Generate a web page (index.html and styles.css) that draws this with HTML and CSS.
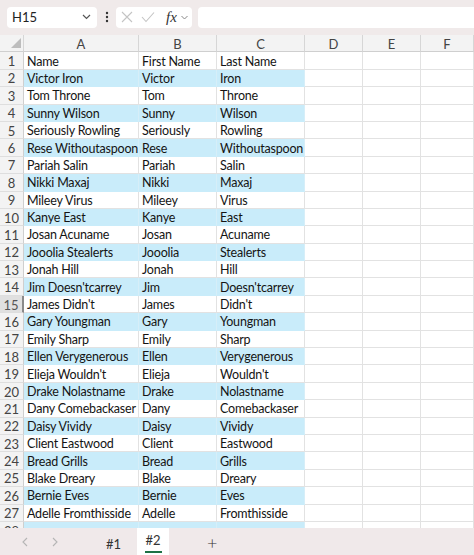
FILE: index.html
```html
<!DOCTYPE html>
<html>
<head>
<meta charset="utf-8">
<link rel="stylesheet" href="styles.css">
</head>
<body>
<div class="app">
  <div class="toolbar">
    <div class="namebox">
      <span class="ref">H15</span>
      <svg class="chev" width="9" height="6" viewBox="0 0 9 6"><path d="M1 1 L4.5 4.5 L8 1" fill="none" stroke="#555" stroke-width="1.2"/></svg>
    </div>
    <svg class="kebab" width="4" height="12" viewBox="0 0 4 12"><circle cx="2" cy="2" r="1.2" fill="#333"/><circle cx="2" cy="6" r="1.2" fill="#333"/><circle cx="2" cy="10" r="1.2" fill="#333"/></svg>
    <div class="fxbox">
      <svg width="12" height="12" viewBox="0 0 12 12"><path d="M1 1 L11 11 M11 1 L1 11" stroke="#c4c4c4" stroke-width="1.1"/></svg>
      <svg width="14" height="12" viewBox="0 0 14 12"><path d="M1 6 L5 10.5 L13 1.5" fill="none" stroke="#c4c4c4" stroke-width="1.1"/></svg>
      <span class="fx">fx</span>
      <svg width="7" height="5" viewBox="0 0 7 5"><path d="M0.5 1 L3.5 4 L6.5 1" fill="none" stroke="#888" stroke-width="1"/></svg>
    </div>
    <div class="formula"></div>
  </div>

  <div class="sheet">
    <div class="grid" id="grid">
      <div class="corner"><svg width="10" height="10" viewBox="0 0 10 10"><path d="M10 0 L10 10 L0 10 Z" fill="#bdbdbd"/></svg></div>
      <div class="ch">A</div><div class="ch">B</div><div class="ch">C</div><div class="ch">D</div><div class="ch">E</div><div class="ch">F</div>
    </div>
  </div>

  <div class="tabs">
    <svg class="nav" width="6" height="10" viewBox="0 0 6 10"><path d="M5 1 L1 5 L5 9" fill="none" stroke="#b5b5b5" stroke-width="1.1"/></svg>
    <svg class="nav nav2" width="6" height="10" viewBox="0 0 6 10"><path d="M1 1 L5 5 L1 9" fill="none" stroke="#b5b5b5" stroke-width="1.1"/></svg>
    <div class="tab">#1</div>
    <div class="tab active"><span>#2</span></div>
    <div class="plus">+</div>
  </div>
</div>
<script>
const rows = [
["Name","First Name","Last Name"],
["Victor Iron","Victor","Iron"],
["Tom Throne","Tom","Throne"],
["Sunny Wilson","Sunny","Wilson"],
["Seriously Rowling","Seriously","Rowling"],
["Rese Withoutaspoon","Rese","Withoutaspoon"],
["Pariah Salin","Pariah","Salin"],
["Nikki Maxaj","Nikki","Maxaj"],
["Mileey Virus","Mileey","Virus"],
["Kanye East","Kanye","East"],
["Josan Acuname","Josan","Acuname"],
["Jooolia Stealerts","Jooolia","Stealerts"],
["Jonah Hill","Jonah","Hill"],
["Jim Doesn'tcarrey","Jim","Doesn'tcarrey"],
["James Didn't","James","Didn't"],
["Gary Youngman","Gary","Youngman"],
["Emily Sharp","Emily","Sharp"],
["Ellen Verygenerous","Ellen","Verygenerous"],
["Elieja Wouldn't","Elieja","Wouldn't"],
["Drake Nolastname","Drake","Nolastname"],
["Dany Comebackaser","Dany","Comebackaser"],
["Daisy Vividy","Daisy","Vividy"],
["Client Eastwood","Client","Eastwood"],
["Bread Grills","Bread","Grills"],
["Blake Dreary","Blake","Dreary"],
["Bernie Eves","Bernie","Eves"],
["Adelle Fromthisside","Adelle","Fromthisside"],
["","",""]
];
const g = document.getElementById('grid');
let html = '';
rows.forEach((r, i) => {
  const n = i + 1;
  const band = (n % 2 === 0) ? ' band' : '';
  html += '<div class="rh' + (n === 15 ? ' sel' : '') + '">' + n + '</div>';
  r.forEach(c => { html += '<div class="cell' + band + '">' + c + '</div>'; });
  html += '<div class="cell"></div><div class="cell"></div><div class="cell"></div>';
});
g.insertAdjacentHTML('beforeend', html);
</script>
</body>
</html>
```

FILE: styles.css
```css
* { box-sizing: border-box; }
html, body { margin: 0; padding: 0; }
body {
  font-family: "Lato", "Noto Sans", sans-serif;
  color: #1b1b1b;
  background: #fff;
  width: 474px;
  height: 555px;
  overflow: hidden;
}
.app {
  display: flex;
  flex-direction: column;
  height: 555px;
}
.toolbar {
  height: 35px;
  flex: none;
  background: #f0eaea;
  display: flex;
  align-items: center;
  padding: 0 0 1px 7px;
}
.namebox {
  width: 90px;
  height: 21px;
  background: #fff;
  border-radius: 4px;
  display: flex;
  align-items: center;
  justify-content: space-between;
  padding: 0 6px 0 5px;
  font-size: 13px;
  color: #222;
}
.kebab { margin: 0 7px 0 8px; }
.fxbox {
  width: 76px;
  height: 21px;
  background: #fff;
  border-radius: 4px;
  display: flex;
  align-items: center;
  padding: 0 3px 0 5px;
  gap: 8px;
}
.fx {
  font-family: "Liberation Serif", serif;
  font-style: italic;
  font-size: 15px;
  color: #333;
  margin-left: 3px;
  margin-right: -4px;
  line-height: 1;
}
.formula {
  flex: 1;
  height: 21px;
  margin-left: 6px;
  background: #fff;
  border-radius: 4px 0 0 4px;
}
.sheet {
  flex: none;
  height: 493px;
  overflow: hidden;
  background: #fff;
}
.grid {
  display: grid;
  grid-template-columns: 24px 115px 78px 88px 58px 58px 53px;
  grid-auto-rows: 17.4px;
}
.corner {
  background: #f3f3f3;
  border-right: 1px solid #d6d6d6;
  border-bottom: 1px solid #cfcfcf;
  display: flex;
  align-items: flex-end;
  justify-content: flex-end;
  padding: 0 2px 3px 0;
}
.ch {
  background: #f3f3f3;
  border-right: 1px solid #d6d6d6;
  border-bottom: 1px solid #cfcfcf;
  font-size: 13px;
  color: #444;
  display: flex;
  align-items: center;
  justify-content: center;
  padding-top: 1px;
}
.rh {
  background: #f3f3f3;
  border-right: 1px solid #cfcfcf;
  border-bottom: 1px solid #dedede;
  font-size: 13px;
  color: #444;
  display: flex;
  align-items: center;
  justify-content: center;
  padding-top: 1px;
}
.rh.sel {
  background: #e0e0e0;
  color: #555;
  border-right: 2px solid #8a8a8a;
}
.cell {
  border-right: 1px solid #e2e2e2;
  border-bottom: 1px solid #e2e2e2;
  font-size: 12.5px;
  letter-spacing: -0.2px;
  padding-left: 3px;
  padding-top: 1px;
  display: flex;
  align-items: center;
  white-space: nowrap;
  overflow: hidden;
  color: #141414;
}
.cell.band {
  background: #c9ecfa;
  border-right-color: #d6eef8;
  border-bottom-color: #c9ecfa;
}
.tabs {
  flex: 1;
  background: #f0e9ea;
  display: flex;
  align-items: stretch;
}
.nav { align-self: center; margin-left: 22px; }
.nav2 { margin-left: 24px; }
.tab {
  font-size: 13px;
  color: #333;
  display: flex;
  align-items: center;
  justify-content: center;
  margin-left: 48px;
  padding-top: 4px;
}
.tab.active {
  width: 32px;
  margin-left: 16px;
  background: #fff;
  flex-direction: column;
  padding-top: 0;
}
.tab.active span {
  border-bottom: 2px solid #1e7145;
  padding: 0 1px 3px;
  margin-top: 1px;
}
.plus {
  font-size: 18px;
  color: #333;
  display: flex;
  align-items: center;
  margin-left: 38px;
  font-weight: 300;
}
```
